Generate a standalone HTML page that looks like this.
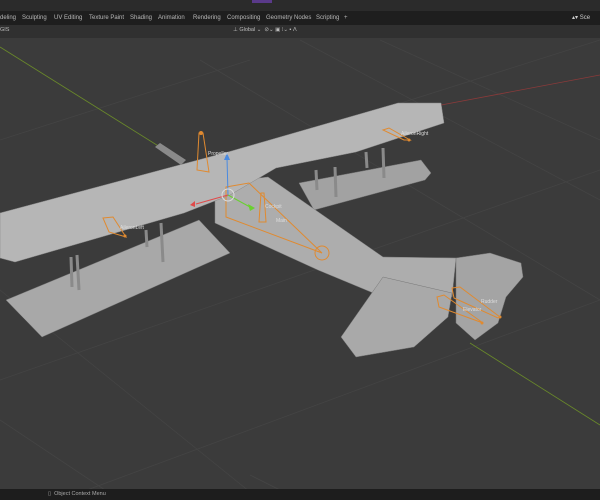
<!DOCTYPE html>
<html><head><meta charset="utf-8"><style>
*{margin:0;padding:0;box-sizing:border-box}
body{width:600px;height:500px;overflow:hidden;background:#3b3b3b;font-family:"Liberation Sans",sans-serif;position:relative}
#top{position:absolute;left:0;top:0;width:600px;height:11px;background:#2b2b2b}
#top .p{position:absolute;left:252px;top:0;width:20px;height:3px;background:#5a3a8a}
#tabs{position:absolute;left:0;top:11px;width:600px;height:14px;background:#1e1e1e;color:#b8b8b8;font-size:6px;line-height:14px;white-space:nowrap}
#tabs span{position:absolute;top:0}
#hdr{position:absolute;left:0;top:25px;width:600px;height:13px;background:#303030;color:#bbb;font-size:5.5px;line-height:11px}
#status{position:absolute;left:0;top:489px;width:600px;height:11px;background:#1d1d1d;color:#aaa;font-size:5.5px;line-height:11px}
svg{position:absolute;left:0;top:0}
</style></head><body>
<svg width="600" height="500" viewBox="0 0 600 500">
<g stroke="#444" stroke-width="0.8" fill="none">
<line x1="0" y1="140" x2="250" y2="60"/><line x1="0" y1="230" x2="600" y2="40"/>
<line x1="0" y1="380" x2="600" y2="170"/><line x1="60" y1="500" x2="600" y2="300"/>
<line x1="200" y1="60" x2="600" y2="300"/><line x1="300" y1="40" x2="600" y2="200"/>
<line x1="0" y1="290" x2="260" y2="500"/><line x1="0" y1="420" x2="120" y2="500"/>
<line x1="380" y1="40" x2="600" y2="140"/><line x1="250" y1="475" x2="300" y2="500"/>
</g>
<line x1="0" y1="47" x2="160" y2="147" stroke="#6a8a2a" stroke-width="0.8"/>
<line x1="600" y1="75" x2="420" y2="109" stroke="#8a3a3a" stroke-width="0.8"/>
<line x1="470" y1="343" x2="600" y2="425" stroke="#6a8a2a" stroke-width="0.8"/>
<!-- lower wings -->
<polygon points="6,300 199,220 230,253 42,337" fill="#a8a8a8" stroke="#777" stroke-width="0.5"/>
<polygon points="299,183 421,160 431,173 425,180 314,210" fill="#a2a2a2" stroke="#777" stroke-width="0.5"/>
<!-- struts -->
<g stroke="#8a8a8a" stroke-width="3">
<line x1="71" y1="257" x2="72" y2="287"/><line x1="77" y1="255" x2="79" y2="290"/>
<line x1="146" y1="230" x2="147" y2="247"/><line x1="161" y1="223" x2="163" y2="262"/>
<line x1="316" y1="170" x2="317" y2="190"/><line x1="335" y1="167" x2="336" y2="197"/>
<line x1="366" y1="152" x2="367" y2="168"/><line x1="383" y1="148" x2="384" y2="178"/>
</g>
<!-- tailplane far + fin -->
<polygon points="456,258 490,253 521,263 523,277 506,297 498,323 475,340 456,323" fill="#a4a4a4" stroke="#777" stroke-width="0.5"/>
<!-- fuselage -->
<polygon points="215,183 268,177 383,257 456,258 452,297 383,297 318,270 215,223" fill="#adadad" stroke="#808080" stroke-width="0.5"/>
<!-- tailplane near -->
<polygon points="383,277 341,337 356,357 414,347 448,317 452,293" fill="#a9a9a9" stroke="#777" stroke-width="0.5"/>
<!-- upper wing -->
<polygon points="0,213 228,152 398,103 441,103 444,123 356,152 276,168 230,195 184,213 15,262 0,258" fill="#b6b6b6" stroke="#888" stroke-width="0.5"/>
<!-- propeller -->
<polygon points="155,147 160,143 186,160 181,165" fill="#8a8a8a"/>
<!-- bones -->
<g fill="none" stroke="#e08a30" stroke-width="1">
<polygon points="199,133 203,133 209,172 197,170"/>
<polygon points="226,187 249,183 322,253 226,217"/>
<polygon points="261,193 264,193 266,222 259,222"/>
<polygon points="103,218 113,217 126,237 109,232"/>
<polygon points="383,130 389,128 410,140 404,140"/>
<polygon points="437,297 444,295 483,323 439,307"/>
<polygon points="452,288 460,287 500,317 498,318 454,298"/>
<circle cx="322" cy="253" r="7"/>
</g>
<g fill="#e08a30"><circle cx="201" cy="133" r="2"/><circle cx="125" cy="236" r="1.5"/><circle cx="409" cy="140" r="1.5"/><circle cx="482" cy="323" r="1.5"/><circle cx="500" cy="317" r="1.5"/></g>
<!-- gizmo -->
<line x1="228" y1="195" x2="227" y2="158" stroke="#4a8ae0" stroke-width="1"/>
<polygon points="224,160 230,160 227,153" fill="#4a8ae0"/>
<line x1="228" y1="195" x2="196" y2="204" stroke="#e04a4a" stroke-width="1"/>
<polygon points="195,201 195,207 190,205" fill="#e04a4a"/>
<line x1="228" y1="195" x2="250" y2="207" stroke="#6ad030" stroke-width="1"/>
<polygon points="248,204 250,211 255,208" fill="#6ad030"/>
<circle cx="228" cy="195" r="6" fill="none" stroke="#ddd" stroke-width="1"/>
<g fill="#ddd" font-size="5" font-family="Liberation Sans,sans-serif">
<text x="208" y="155">Propeller</text><text x="120" y="229">AileronLeft</text>
<text x="401" y="135">AileronRight</text><text x="265" y="208">Cockpit</text>
<text x="276" y="222">Main</text><text x="481" y="303">Rudder</text><text x="463" y="311">Elevator</text>
</g>
</svg>
<div id="top"><div class="p"></div></div>
<div id="tabs">
<span style="left:0">deling</span><span style="left:22px">Sculpting</span><span style="left:54px">UV Editing</span><span style="left:89px">Texture Paint</span><span style="left:130px">Shading</span><span style="left:158px">Animation</span><span style="left:193px">Rendering</span><span style="left:227px">Compositing</span><span style="left:266px">Geometry Nodes</span><span style="left:316px">Scripting</span><span style="left:344px">+</span>
<span style="left:572px;color:#ccc">▴▾ Sce</span>
</div>
<div id="hdr"><span style="position:absolute;left:0">GIS</span><span style="position:absolute;left:233px">⊥ Global ⌄ &nbsp;⊘⌄ ▣ ⁞⌄ ▪ Λ</span></div>
<div id="status"><span style="position:absolute;left:48px">▯ &nbsp;Object Context Menu</span></div>
</body></html>
